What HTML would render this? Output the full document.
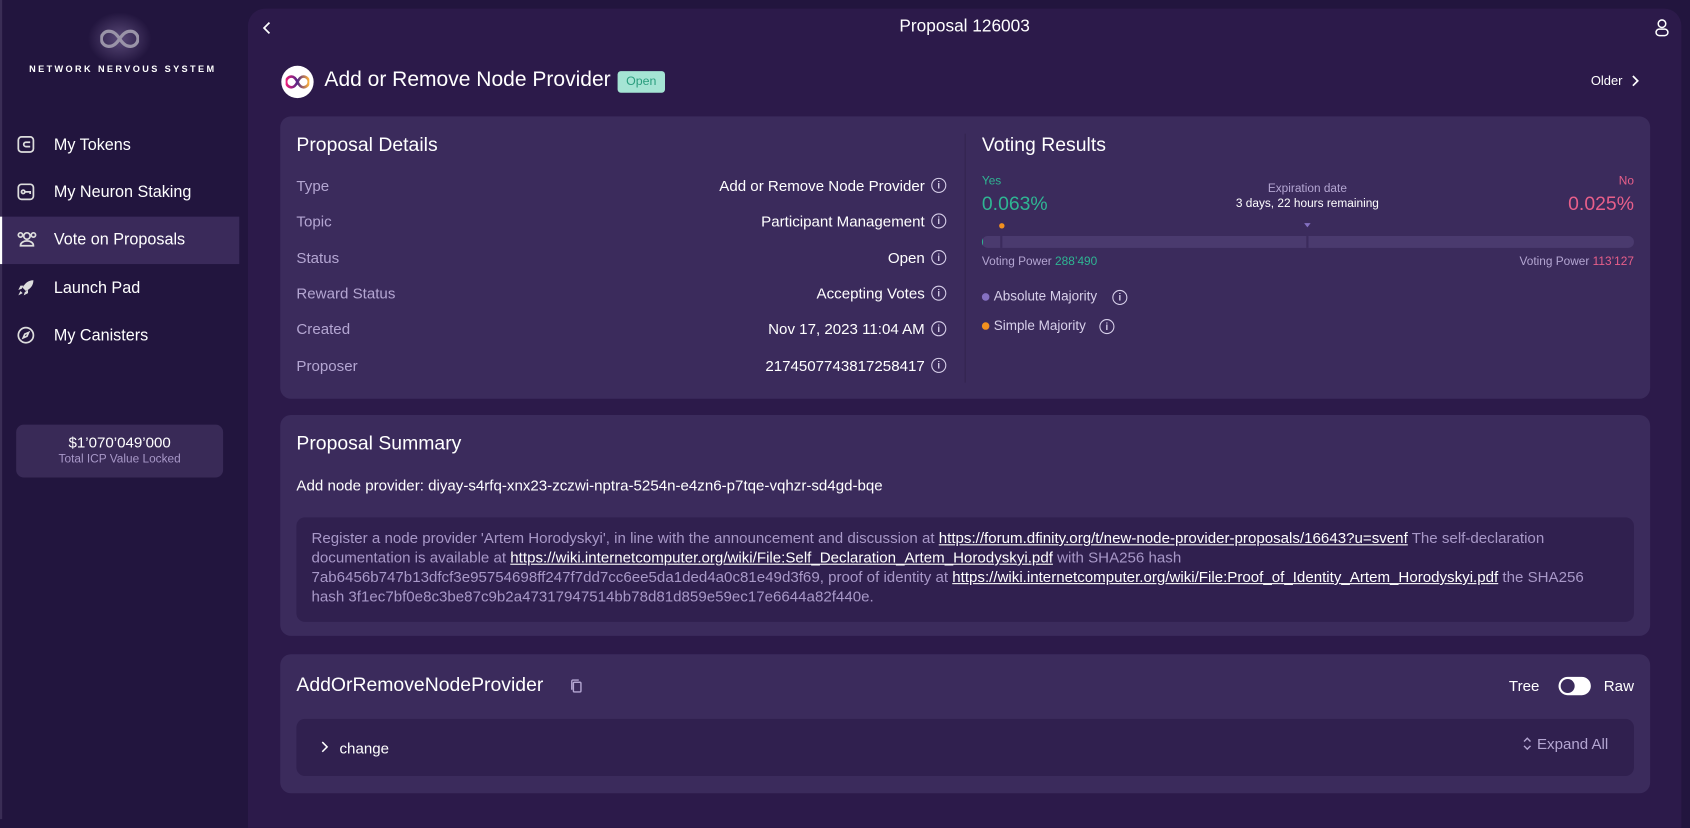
<!DOCTYPE html>
<html><head><meta charset="utf-8"><style>
*{box-sizing:border-box;margin:0;padding:0}
html,body{width:1690px;height:813px;overflow:hidden;background:#22153e;font-family:"Liberation Sans",sans-serif;color:#fff}
#w{position:absolute;left:0;top:0;width:1568px;height:760px;transform:scale(1.07781);transform-origin:0 0}
.a{position:absolute;white-space:nowrap}
.nav{position:absolute;left:0;width:222px;height:44px;font-size:15px;color:#fff}
.nav span{position:absolute;left:50px;top:13px}
.nav svg{position:absolute;left:15px;top:12px}
.card{position:absolute;left:260px;width:1271px;background:#3b2b5c;border-radius:10px}
.lbl{position:absolute;left:15px;font-size:14px;color:#b4a6d2}
.val{position:absolute;right:673px;font-size:14px;color:#fff;text-align:right}
.info{position:absolute;width:14px;height:14px;border:1.3px solid #d8d0ea;border-radius:50%;font-size:9px;line-height:12px;text-align:center;color:#d8d0ea;font-weight:bold}
a{color:#fff;text-decoration:underline}
</style></head><body><div id="w">
<!-- sidebar -->
<div class="a" style="left:0;top:0;width:2px;height:760px;background:#3a2d55"></div>
<div class="a" style="left:81px;top:11px;width:60px;height:50px;border-radius:50%;background:radial-gradient(#5a4a78 0%,rgba(34,21,62,0) 70%)"></div>
<svg class="a" style="left:93px;top:27px" width="36" height="18" viewBox="0 0 36 18"><path d="M18 9C14 3 11 2 8 2a7 7 0 0 0 0 14c3 0 6-1 10-7c4-6 7-7 10-7a7 7 0 0 1 0 14c-3 0-6-1-10-7" fill="none" stroke="#9a94a8" stroke-width="3"/></svg>
<div class="a" style="left:27px;top:59px;font-size:8.5px;letter-spacing:2.2px;color:#fff;font-weight:bold">NETWORK NERVOUS SYSTEM</div>
<div class="nav" style="top:113px"><svg width="18" height="18" viewBox="0 0 18 18" fill="none" stroke="#ddd" stroke-width="1.6"><rect x="2" y="2" width="14" height="14" rx="3"/><path d="M13 7h-4a2 2 0 0 0 0 4h4"/></svg><span>My Tokens</span></div>
<div class="nav" style="top:157px"><svg width="18" height="18" viewBox="0 0 18 18" fill="none" stroke="#ddd" stroke-width="1.6"><rect x="2" y="2" width="14" height="14" rx="3"/><circle cx="6.5" cy="9" r="1.6"/><path d="M8 9h5v2"/></svg><span>My Neuron Staking</span></div>
<div class="nav" style="top:201px;background:#3a2a5a;border-left:2px solid #fff"><svg width="20" height="18" viewBox="0 0 20 18" fill="none" stroke="#ddd" stroke-width="1.6" style="left:13px"><circle cx="10" cy="6" r="3"/><path d="M4 15c0-3 3-4.5 6-4.5s6 1.5 6 4.5z"/><circle cx="4" cy="5" r="2"/><circle cx="16" cy="5" r="2"/></svg><span style="left:48px">Vote on Proposals</span></div>
<div class="nav" style="top:246px"><svg width="18" height="18" viewBox="0 0 18 18" fill="#ddd"><path d="M16 2c-5 0-8 3-10 7l3 3c4-2 7-5 7-10zM5 10l-3 1 2-4 3 0zM8 13l-1 3 4-2 0-3zM4 12l2 2-4 2z"/></svg><span>Launch Pad</span></div>
<div class="nav" style="top:290px"><svg width="18" height="18" viewBox="0 0 18 18" fill="none" stroke="#ddd" stroke-width="1.6"><circle cx="9" cy="9" r="7"/><path d="M11.5 6.5L10 10 6.5 11.5 8 8z"/></svg><span>My Canisters</span></div>
<div class="a" style="left:15px;top:394px;width:192px;height:49px;background:#392a57;border-radius:7px;text-align:center">
<div style="font-size:14px;margin-top:8px">$1’070’049’000</div><div style="font-size:11px;color:#a898c8;margin-top:2px">Total ICP Value Locked</div></div>
<!-- main -->
<div class="a" style="left:230px;top:8px;width:1330px;height:760px;background:#2c1a4a;border-radius:16px 16px 0 0"></div>
<svg class="a" style="left:243px;top:19px" width="10" height="14" viewBox="0 0 10 14"><path d="M7 2L2 7l5 5" fill="none" stroke="#fff" stroke-width="1.6"/></svg>
<div class="a" style="left:795px;top:16px;width:200px;text-align:center;font-size:16px">Proposal 126003</div>
<svg class="a" style="left:1535px;top:17px" width="14" height="18" viewBox="0 0 14 18" fill="none" stroke="#fff" stroke-width="1.4"><circle cx="7" cy="5" r="3.5"/><rect x="1.5" y="10" width="11" height="6" rx="3"/></svg>
<div class="a" style="left:261px;top:61px;width:30px;height:30px;border-radius:50%;background:#fff"></div>
<svg class="a" style="left:265px;top:69px" width="22" height="14" viewBox="0 0 22 14"><defs><linearGradient id="g" x1="0" x2="1"><stop offset="0" stop-color="#ed1e79"/><stop offset=".5" stop-color="#522785"/><stop offset="1" stop-color="#fbb03b"/></linearGradient></defs><path d="M11 7C9 3 7 2 5.5 2a5 5 0 0 0 0 10c1.5 0 3.5-1 5.5-5s4-5 5.5-5a5 5 0 0 1 0 10c-1.5 0-3.5-1-5.5-5" fill="none" stroke="url(#g)" stroke-width="2.4"/></svg>
<div class="a" style="left:301px;top:63px;font-size:19.5px">Add or Remove Node Provider</div>
<div class="a" style="left:573px;top:66px;width:44px;height:20px;background:#a5e4d4;border-radius:3px;font-size:11.5px;color:#2a9d7e;text-align:center;line-height:20px">Open</div>
<div class="a" style="left:1476px;top:68px;font-size:12px">Older</div>
<svg class="a" style="left:1512px;top:69px" width="10" height="12" viewBox="0 0 10 12"><path d="M3 1.5L7.5 6 3 10.5" fill="none" stroke="#fff" stroke-width="1.6"/></svg>
<!-- card1 -->
<div class="card" style="top:108px;height:262px">
<div class="a" style="left:15px;top:16px;font-size:18px">Proposal Details</div>
<div class="lbl" style="top:56px">Type</div><div class="val" style="top:56px">Add or Remove Node Provider</div><div class="info" style="left:604px;top:57px">i</div>
<div class="lbl" style="top:89px">Topic</div><div class="val" style="top:89px">Participant Management</div><div class="info" style="left:604px;top:90px">i</div>
<div class="lbl" style="top:123px">Status</div><div class="val" style="top:123px">Open</div><div class="info" style="left:604px;top:124px">i</div>
<div class="lbl" style="top:156px">Reward Status</div><div class="val" style="top:156px">Accepting Votes</div><div class="info" style="left:604px;top:157px">i</div>
<div class="lbl" style="top:189px">Created</div><div class="val" style="top:189px">Nov 17, 2023 11:04 AM</div><div class="info" style="left:604px;top:190px">i</div>
<div class="lbl" style="top:223px">Proposer</div><div class="val" style="top:223px">2174507743817258417</div><div class="info" style="left:604px;top:224px">i</div>
<div class="a" style="left:635px;top:16px;width:1px;height:231px;background:#33244f"></div>
<div class="a" style="left:651px;top:16px;font-size:18px">Voting Results</div>
<div class="a" style="left:651px;top:54px;font-size:11px;color:#2fb593">Yes</div>
<div class="a" style="left:651px;top:71px;font-size:18px;color:#2fb593">0.063%</div>
<div class="a" style="left:853px;top:61px;width:200px;text-align:center;font-size:11px;color:#b4a6d2">Expiration date</div>
<div class="a" style="left:853px;top:75px;width:200px;text-align:center;font-size:11px">3 days, 22 hours remaining</div>
<div class="a" style="right:15px;top:54px;font-size:11px;color:#e85f8a">No</div>
<div class="a" style="right:15px;top:71px;font-size:18px;color:#e85f8a">0.025%</div>
<div class="a" style="left:667px;top:99px;width:5px;height:5px;border-radius:50%;background:#f3901f"></div>
<div class="a" style="left:950px;top:99px;width:0;height:0;border-left:3.5px solid transparent;border-right:3.5px solid transparent;border-top:4px solid #8571c2"></div>
<div class="a" style="left:651px;top:111px;width:605px;height:11px;background:#4a3a6e;border-radius:6px;overflow:hidden"><div style="position:absolute;left:0;width:1px;height:11px;background:#2fb593"></div><div style="position:absolute;left:17px;width:1.5px;height:11px;background:#3b2b5c"></div><div style="position:absolute;left:301px;width:1.5px;height:11px;background:#3b2b5c"></div></div>
<div class="a" style="left:651px;top:129px;font-size:11px;color:#b4a6d2">Voting Power <span style="color:#2fb593">288’490</span></div>
<div class="a" style="right:15px;top:129px;font-size:11px;color:#b4a6d2">Voting Power <span style="color:#e85f8a">113’127</span></div>
<div class="a" style="left:651px;top:164px;width:7px;height:7px;border-radius:50%;background:#8571c2"></div>
<div class="a" style="left:662px;top:160px;font-size:12.5px;color:#d8d0ea">Absolute Majority</div><div class="info" style="left:772px;top:161px">i</div>
<div class="a" style="left:651px;top:191px;width:7px;height:7px;border-radius:50%;background:#f3901f"></div>
<div class="a" style="left:662px;top:187px;font-size:12.5px;color:#d8d0ea">Simple Majority</div><div class="info" style="left:760px;top:188px">i</div>
</div>
<!-- card2 -->
<div class="card" style="top:385px;height:205px">
<div class="a" style="left:15px;top:16px;font-size:18px">Proposal Summary</div>
<div class="a" style="left:15px;top:57px;font-size:14px">Add node provider: diyay-s4rfq-xnx23-zczwi-nptra-5254n-e4zn6-p7tqe-vqhzr-sd4gd-bqe</div>
<div class="a" style="left:15px;top:95px;width:1241px;height:97px;background:#30204f;border-radius:8px;padding:10px 14px;font-size:14px;line-height:18px;color:#a898c8;white-space:normal">Register a node provider 'Artem Horodyskyi', in line with the announcement and discussion at <a>https://forum.dfinity.org/t/new-node-provider-proposals/16643?u=svenf</a> The self-declaration documentation is available at <a>https://wiki.internetcomputer.org/wiki/File:Self_Declaration_Artem_Horodyskyi.pdf</a> with SHA256 hash 7ab6456b747b13dfcf3e95754698ff247f7dd7cc6ee5da1ded4a0c81e49d3f69, proof of identity at <a>https://wiki.internetcomputer.org/wiki/File:Proof_of_Identity_Artem_Horodyskyi.pdf</a> the SHA256 hash 3f1ec7bf0e8c3be87c9b2a47317947514bb78d81d859e59ec17e6644a82f440e.</div>
</div>
<!-- card3 -->
<div class="card" style="top:607px;height:129px">
<div class="a" style="left:15px;top:18px;font-size:18px">AddOrRemoveNodeProvider</div>
<svg class="a" style="left:269px;top:23px" width="12" height="14" viewBox="0 0 12 14" fill="none" stroke="#b4a6d2" stroke-width="1.3"><rect x="3" y="3" width="7" height="9" rx="1"/><path d="M1.5 10V2a1 1 0 0 1 1-1H8"/></svg>
<div class="a" style="left:1140px;top:21px;font-size:14px">Tree</div>
<div class="a" style="left:1186px;top:21px;width:30px;height:17px;border-radius:9px;background:#fff"><div style="position:absolute;left:2px;top:2px;width:13px;height:13px;border-radius:50%;background:#3b2b5c"></div></div>
<div class="a" style="left:1228px;top:21px;font-size:14px">Raw</div>
<div class="a" style="left:15px;top:60px;width:1241px;height:53px;background:#30204f;border-radius:8px"></div>
<svg class="a" style="left:37px;top:80px" width="8" height="12" viewBox="0 0 8 12"><path d="M2 1.5L6.5 6 2 10.5" fill="none" stroke="#fff" stroke-width="1.4"/></svg>
<div class="a" style="left:55px;top:79px;font-size:14px">change</div>
<svg class="a" style="left:1152px;top:76px" width="10" height="14" viewBox="0 0 10 14"><path d="M2 5l3-3 3 3M2 9l3 3 3-3" fill="none" stroke="#b4a6d2" stroke-width="1.3"/></svg>
<div class="a" style="left:1166px;top:75px;font-size:14px;color:#b4a6d2">Expand All</div>
</div>
</div></body></html>
